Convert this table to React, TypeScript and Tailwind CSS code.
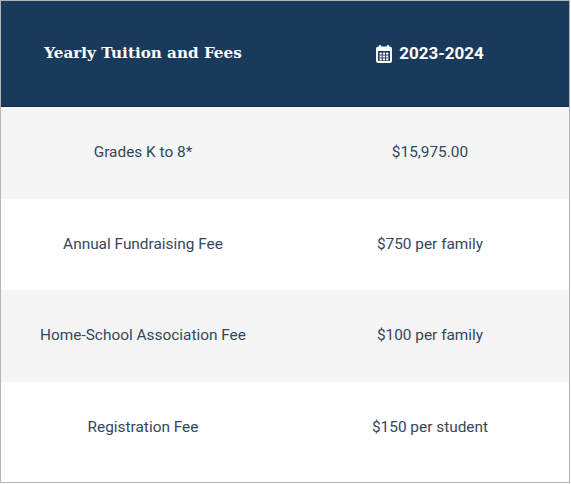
import React from "react";

const rows = [
  { label: "Grades K to 8*", value: "$15,975.00" },
  { label: "Annual Fundraising Fee", value: "$750 per family" },
  { label: "Home-School Association Fee", value: "$100 per family" },
  { label: "Registration Fee", value: "$150 per student" },
];

const CalendarIcon = () => (
  <svg width="16" height="18" viewBox="0 0 16 18" fill="none" className="shrink-0">
    <rect x="3" y="0" width="2" height="4" rx="0.5" fill="#fff" />
    <rect x="11" y="0" width="2" height="4" rx="0.5" fill="#fff" />
    <rect x="1" y="2.5" width="14" height="14.5" rx="1.5" stroke="#fff" strokeWidth="2" />
    <rect x="1" y="2.5" width="14" height="3.5" fill="#fff" />
    {[0, 1, 2].map((r) =>
      [0, 1, 2].map((c) => (
        <rect key={`${r}-${c}`} x={3.5 + c * 3.3} y={7.6 + r * 2.9} width="2.3" height="2" fill="#fff" />
      ))
    )}
  </svg>
);

export default function App() {
  return (
    <div className="w-[571px] h-[484px] bg-white" style={{ fontFamily: "Roboto, 'Liberation Sans', sans-serif" }}>
      <div className="w-[570px] h-[483px] border border-[#b4b4b4] flex flex-col overflow-hidden">
        <div className="h-[106px] shrink-0 flex bg-[#1a3a5b] border-b border-[#122c47] text-white">
          <div className="w-1/2 flex items-center justify-center">
            <span className="text-[15.2px] font-bold" style={{ fontFamily: "'DejaVu Serif', serif" }}>
              Yearly Tuition and Fees
            </span>
          </div>
          <div className="w-1/2 flex items-center justify-center gap-[7px] pl-[6px]">
            <CalendarIcon />
            <span className="text-[17px] font-bold">2023-2024</span>
          </div>
        </div>
        {rows.map((row, i) => (
          <div
            key={row.label}
            className={`h-[91.5px] shrink-0 flex text-[15.4px] text-[#35465a] ${i % 2 === 0 ? "bg-[#f5f5f5]" : "bg-white"}`}
          >
            <div className="w-1/2 flex items-center justify-center">{row.label}</div>
            <div className="w-1/2 flex items-center justify-center pl-[6px]">{row.value}</div>
          </div>
        ))}
      </div>
    </div>
  );
}
